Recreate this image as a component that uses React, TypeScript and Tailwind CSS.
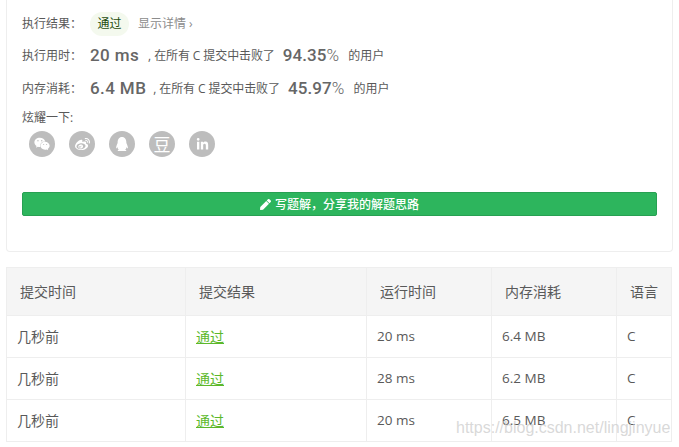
import { FaWeixin, FaWeibo, FaQq, FaLinkedinIn, FaPen } from "react-icons/fa";

const font = "font-['Open_Sans','Noto_Sans_CJK_SC',sans-serif]";

const stats = [
  { label: "执行用时：", value: "20 ms", pct: "94.35", gap: "mr-[9px]" },
  { label: "内存消耗：", value: "6.4 MB", pct: "45.97", gap: "mr-[7px]" },
];

const rows = [
  ["几秒前", "20 ms", "6.4 MB"],
  ["几秒前", "28 ms", "6.2 MB"],
  ["几秒前", "20 ms", "6.5 MB"],
];

const cols = ["w-[179px]", "w-[181px]", "w-[125px]", "w-[125px]", "w-[55px]"];

function Share({ children }: { children: React.ReactNode }) {
  return (
    <div className="flex h-[26px] w-[26px] items-center justify-center rounded-full bg-[#bdbdbd] text-white">
      {children}
    </div>
  );
}

export default function App() {
  return (
    <div className={`relative h-[447px] w-[679px] overflow-hidden bg-white ${font}`}>
      <div className="mx-[6px] h-[252px] w-[667px] rounded-b-[4px] border-x border-b border-[#eeeeee] px-[15px] pt-[12px]">
        <div className="flex h-[24px] items-center text-[12px] text-[#595959]">
          <span className="w-[68px]">执行结果：</span>
          <span className="flex h-[24px] w-[39px] items-center justify-center rounded-full bg-[#f4f9ee] text-[#1f4d0f]">
            通过
          </span>
          <span className="ml-[9px] text-[#8c8c8c]">显示详情 ›</span>
        </div>
        {stats.map((s, i) => (
          <div key={s.label} className={`flex h-[24px] items-center text-[#595959] ${i === 0 ? "mt-[8px]" : "mt-[9px]"}`}>
            <span className="w-[68px] text-[12px]">{s.label}</span>
            <span className={`font-['Roboto'] text-[17px] font-medium tracking-[0.4px] text-[#666666] ${s.gap}`}>{s.value}</span>
            <span className="text-[12px] tracking-[-0.1px]">, 在所有 C 提交中击败了</span>
            <span className="ml-[8px] font-['Roboto'] text-[17px] font-medium tracking-[0.1px] text-[#666666]">
              {s.pct}
              <span className="font-light">%</span>
            </span>
            <span className="ml-[9px] text-[12px]">的用户</span>
          </div>
        ))}
        <div className="mt-[8px] text-[12px] leading-[18px] text-[#595959]">炫耀一下:</div>
        <div className="ml-[7px] mt-[4px] flex gap-[14px]">
          <Share><FaWeixin size={16} /></Share>
          <Share><FaWeibo size={15} /></Share>
          <Share><FaQq size={14} /></Share>
          <Share><span className="text-[17px] leading-none">豆</span></Share>
          <Share><FaLinkedinIn size={13} /></Share>
        </div>
        <button className="mt-[35px] flex h-[24px] w-[635px] items-center justify-center gap-[4px] rounded-[2px] border border-[#27a052] bg-[#2db55d] pt-[1px] text-[12px] font-medium text-white">
          <FaPen size={11} />
          写题解，分享我的解题思路
        </button>
      </div>

      <div className="mx-[6px] mt-[15px] w-[666px] border-l border-t border-[#eeeeee] text-[13.5px] text-[#595959]">
        <div className="flex h-[48px] bg-[#f5f5f5]">
          {["提交时间", "提交结果", "运行时间", "内存消耗", "语言"].map((h, i) => (
            <div key={h} className={`${cols[i]} flex items-center border-b border-r border-[#eeeeee] pl-[13px] text-[14px]`}>
              {h}
            </div>
          ))}
        </div>
        {rows.map((r, i) => (
          <div key={i} className="flex h-[42px]">
            <div className={`${cols[0]} flex items-center border-b border-r border-[#eeeeee] pl-[10px] text-[14px]`}>{r[0]}</div>
            <div className={`${cols[1]} flex items-center border-b border-r border-[#eeeeee] pl-[10px] text-[14px]`}>
              <span className="text-[#5cb82a] underline">通过</span>
            </div>
            <div className={`${cols[2]} flex items-center border-b border-r border-[#eeeeee] pl-[10px]`}>{r[1]}</div>
            <div className={`${cols[3]} flex items-center border-b border-r border-[#eeeeee] pl-[10px]`}>{r[2]}</div>
            <div className={`${cols[4]} flex items-center border-b border-r border-[#eeeeee] pl-[10px]`}>C</div>
          </div>
        ))}
      </div>

      <span className="absolute left-[456px] top-[416px] font-['Liberation_Sans'] text-[16px] text-[#c8c8c8]/70">
        https://blog.csdn.net/lingjinyue
      </span>
    </div>
  );
}
